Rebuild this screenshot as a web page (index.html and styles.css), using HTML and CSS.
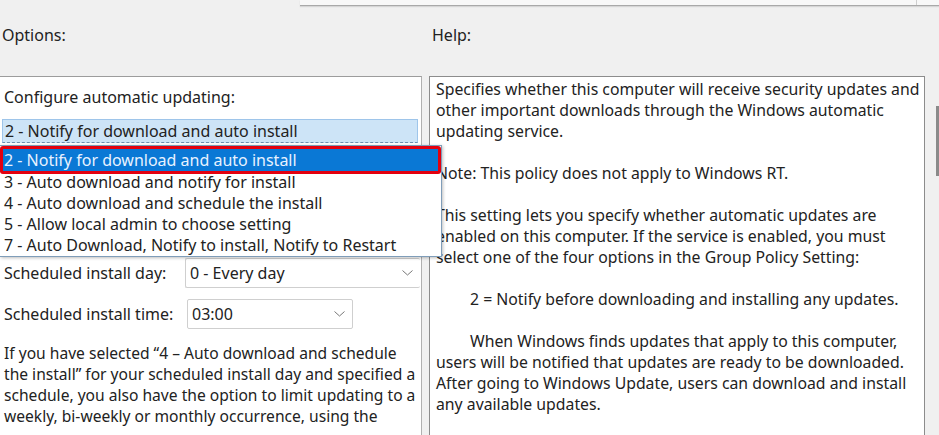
FILE: index.html
```html
<!DOCTYPE html>
<html lang="en">
<head>
    <meta charset="UTF-8">
    <meta name="viewport" content="width=device-width, initial-scale=1.0">
    <title>Configure Automatic Updates</title>
    <link rel="stylesheet" href="styles.css">
</head>
<body>
    <div class="tabbar">
        <div class="tab"></div>
        <div class="tab small"></div>
    </div>
    <div class="main">
        <div class="options">
            <div class="heading">Options:</div>
            <div class="panel">
                <div class="line">Configure automatic updating:</div>
                <div class="combo">2 - Notify for download and auto install</div>

                <div class="row day">
                    <span class="lbl">Scheduled install day:</span>
                    <div class="select wide">
                        <span>0 - Every day</span>
                        <svg width="11" height="6" viewBox="0 0 11 6"><polyline points="0.5,0.5 5.5,5 10.5,0.5" fill="none" stroke="#777" stroke-width="1"/></svg>
                    </div>
                </div>
                <div class="row">
                    <span class="lbl">Scheduled install time:</span>
                    <div class="select short">
                        <span>03:00</span>
                        <svg width="11" height="6" viewBox="0 0 11 6"><polyline points="0.5,0.5 5.5,5 10.5,0.5" fill="none" stroke="#777" stroke-width="1"/></svg>
                    </div>
                </div>
                <p class="note">If you have selected “4 – Auto download and schedule<br>
                the install” for your scheduled install day and specified a<br>
                schedule, you also have the option to limit updating to a<br>
                weekly, bi-weekly or monthly occurrence, using the</p>

                <!-- open dropdown list -->
                <div class="dropdown">
                    <div class="item active">2 - Notify for download and auto install</div>
                    <div class="item">3 - Auto download and notify for install</div>
                    <div class="item">4 - Auto download and schedule the install</div>
                    <div class="item">5 - Allow local admin to choose setting</div>
                    <div class="item">7 - Auto Download, Notify to install, Notify to Restart</div>
                </div>
                <div class="mark"></div>
            </div>
        </div>

        <div class="help">
            <div class="heading">Help:</div>
            <div class="helpbox">
                <p>Specifies whether this computer will receive security updates and<br>
                other important downloads through the Windows automatic<br>
                updating service.</p>
                <p>Note: This policy does not apply to Windows RT.</p>
                <p>This setting lets you specify whether automatic updates are<br>
                enabled on this computer. If the service is enabled, you must<br>
                select one of the four options in the Group Policy Setting:</p>
                <p class="indent">2 = Notify before downloading and installing any updates.</p>
                <p class="indent">When Windows finds updates that apply to this computer,<br>
                users will be notified that updates are ready to be downloaded.<br>
                After going to Windows Update, users can download and install<br>
                any available updates.</p>
            </div>
        </div>

        <div class="scroll">
            <div class="thumb"></div>
        </div>
    </div>
</body>
</html>
```

FILE: styles.css
```css
*, *::before, *::after {
    box-sizing: border-box;
}
body {
    margin: 0;
    background-color: #f0f0f0;
    color: #222;
    font-family: "Noto Sans", "Open Sans", sans-serif;
    font-size: 16px;
    line-height: 21px;
    overflow: hidden;
    height: 435px;
}
p {
    margin: 0;
}

/* strip of the tab control above */
.tabbar {
    display: flex;
    margin-left: 300px;
    height: 6px;
    border-bottom: 1px solid #a9a9a9;
    box-shadow: 0 1px 1px #d6d6d6;
}
.tab {
    width: 617px;
    background-color: #f8f8f8;
    border-right: 1px solid #cfcfcf;
}
.tab.small {
    flex: 1;
    border-right: none;
}

.main {
    display: flex;
    gap: 7px;
}
.heading {
    height: 70px;
    padding-top: 19px;
}

/* left column */
.options {
    width: 422px;
}
.options .heading {
    padding-left: 2px;
}
.panel {
    position: relative;
    height: 400px;
    background-color: white;
    border-top: 1px solid #9c9c9c;
    border-right: 1px solid #b0b0b0;
    padding-top: 10px;
}
.line {
    padding-left: 4px;
}
.combo {
    margin: 11px 0 0 2px;
    width: 416px;
    height: 24px;
    line-height: 22px;
    padding-left: 2px;
    background-color: #cde4f7;
    border: 1px solid #9ec5ea;
    border-bottom: 1px dashed #6d8fb0;
}

.row {
    display: flex;
    align-items: center;
    margin-top: 11px;
    padding-left: 4px;
}
.row.day {
    margin-top: 115px;
}
.lbl {
    width: 183px;
}
.select {
    display: flex;
    align-items: center;
    justify-content: space-between;
    height: 30px;
    padding: 0 7px 0 4px;
    background-color: white;
    border: 1px solid #cfcfcf;
    border-radius: 2px;
}
.select.wide {
    width: 235px;
    margin-left: -2px;
    border-right: none;
}
.select.short {
    width: 166px;
}
.note {
    margin-top: 14px;
    padding-left: 4px;
    white-space: nowrap;
    font-size: 15.6px;
}

/* popup list of the combo */
.dropdown {
    position: absolute;
    z-index: 2;
    top: 68px;
    left: 0;
    width: 442px;
    padding-top: 3px;
    background-color: white;
    border: 1px solid #7f9db9;
    border-left: none;
    box-shadow: 1px 1px 3px rgba(0, 0, 0, 0.25);
}
.item {
    padding-left: 4px;
    white-space: nowrap;
}
.item.active {
    height: 23px;
    line-height: 22px;
    background-color: #0a78d5;
    color: #e8f2ff;
}
.mark {
    position: absolute;
    z-index: 3;
    top: 69px;
    left: 0;
    width: 441px;
    height: 28px;
    border: 3px solid #e3000f;
    border-radius: 3px;
}

/* right column */
.help {
    width: 496px;
}
.help .heading {
    padding-left: 3px;
}
.helpbox {
    height: 400px;
    padding: 2px 0 0 6px;
    background-color: white;
    border: 1px solid #8c8c8c;
    white-space: nowrap;
    font-size: 15.8px;
}
.helpbox p {
    margin-bottom: 21px;
}
.helpbox .indent {
    text-indent: 34px;
}

.scroll {
    flex: 1;
    display: flex;
    justify-content: flex-end;
}
.thumb {
    margin-top: 100px;
    width: 3px;
    height: 70px;
    background-color: #8a8a8a;
}
```
